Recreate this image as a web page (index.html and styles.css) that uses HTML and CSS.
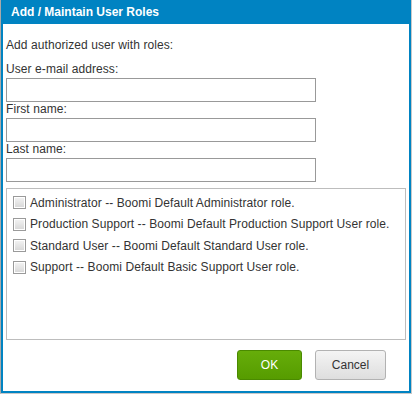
FILE: index.html
```html
<!DOCTYPE html>
<html>
<head>
<meta charset="utf-8">
<link rel="stylesheet" href="styles.css">
</head>
<body>
<div class="dialog">
  <div class="frame">
    <div class="titlebar">Add / Maintain User Roles</div>
    <div class="content">
      <div class="intro">Add authorized user with roles:</div>
      <div class="field">
        <div class="label">User e-mail address:</div>
        <div class="input"></div>
      </div>
      <div class="field">
        <div class="label">First name:</div>
        <div class="input"></div>
      </div>
      <div class="field">
        <div class="label">Last name:</div>
        <div class="input"></div>
      </div>
      <div class="roles">
        <div class="role"><span class="check"></span><span>Administrator -- Boomi Default Administrator role.</span></div>
        <div class="role"><span class="check"></span><span>Production Support -- Boomi Default Production Support User role.</span></div>
        <div class="role"><span class="check"></span><span>Standard User -- Boomi Default Standard User role.</span></div>
        <div class="role"><span class="check"></span><span>Support -- Boomi Default Basic Support User role.</span></div>
      </div>
      <div class="actions">
        <div class="btn btn-ok">OK</div>
        <div class="btn btn-cancel">Cancel</div>
      </div>
    </div>
  </div>
</div>
</body>
</html>
```

FILE: styles.css
```css
html, body {
  margin: 0;
  padding: 0;
  background: #ffffff;
}
body {
  font-family: "Liberation Sans", Arial, sans-serif;
  font-size: 12px;
  color: #333333;
}
.dialog {
  width: 412px;
  height: 394px;
  box-sizing: border-box;
  border-left: 1px solid #a9a9a9;
  border-right: 1px solid #c8c8c8;
  border-bottom: 1px solid #c8c8c8;
}
.frame {
  height: 100%;
  box-sizing: border-box;
  background: #ffffff;
  border-left: 2px solid #0083c2;
  border-right: 2px solid #0083c2;
  border-bottom: 2px solid #0083c2;
  display: flex;
  flex-direction: column;
}
.titlebar {
  height: 24px;
  background: #0083c2;
  color: #ffffff;
  font-weight: bold;
  font-size: 12px;
  line-height: 24px;
  margin-left: -2px;
  margin-right: -2px;
  padding-left: 10px;
}
.content {
  flex: 1;
  display: flex;
  flex-direction: column;
  padding: 14px 2px 0 3px;
  letter-spacing: 0.08px;
}
.intro {
  line-height: 15px;
  margin-bottom: 9px;
}
.label {
  line-height: 15px;
  margin-bottom: 1px;
}
.input {
  width: 310px;
  height: 24px;
  box-sizing: border-box;
  border: 1px solid #999999;
  background: #ffffff;
}
.roles {
  margin-top: 6px;
  width: 400px;
  height: 152px;
  box-sizing: border-box;
  border: 1px solid #bdbdbd;
  padding: 3px 0 0 6px;
}
.role {
  display: flex;
  align-items: center;
  height: 21.5px;
}
.check {
  width: 11px;
  height: 11px;
  border: 1px solid #9a9a9a;
  background: linear-gradient(#f4f4f4, #d6d6d6);
  box-shadow: inset 0 0 0 1px #ffffff;
  margin-right: 4px;
  flex: none;
}
.actions {
  display: flex;
  justify-content: flex-end;
  gap: 13px;
  margin-top: 10px;
  padding-right: 21px;
}
.btn {
  height: 30px;
  box-sizing: border-box;
  border-radius: 3px;
  display: flex;
  align-items: center;
  justify-content: center;
  font-size: 12px;
  letter-spacing: 0;
}
.btn-ok {
  width: 65px;
  background: linear-gradient(#66ad0a, #569c00);
  border: 1px solid #4a8a00;
  color: #ffffff;
}
.btn-cancel {
  width: 71px;
  background: linear-gradient(#f4f4f4, #dedede);
  border: 1px solid #b2b2b2;
  color: #333333;
}
```
